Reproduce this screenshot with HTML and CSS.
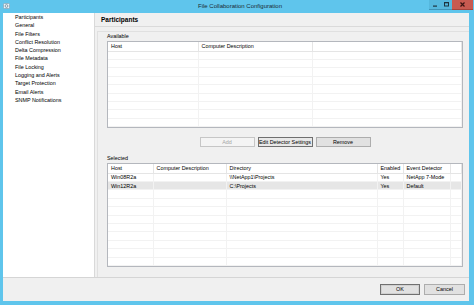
FILE: index.html
```html
<!DOCTYPE html>
<html>
    <head>
        <title>File Collaboration Configuration</title>
        <link rel="stylesheet" href="styles.css">
    </head>
    <body>
<div class="window">
    <div class="titlebar">
        <div class="appicon">
            <svg width="8" height="8" viewBox="0 0 8 8">
                <rect x="0.5" y="1.5" width="6" height="5" rx="1" fill="#e8f4fa" stroke="#8fa9b8" stroke-width="0.8"/>
                <circle cx="3.5" cy="4" r="1.4" fill="none" stroke="#6d8797" stroke-width="0.8"/>
            </svg>
        </div>
        <div class="title">File Collaboration Configuration</div>
        <div class="controls">
            <div class="ctl min">
                <svg width="12" height="9" viewBox="0 0 12 9"><rect x="4" y="5.5" width="4" height="1.2" fill="#1d3440"/></svg>
            </div>
            <div class="ctl max">
                <svg width="11" height="9" viewBox="0 0 11 9"><rect x="3.5" y="2.5" width="4" height="3.5" fill="none" stroke="#1d3440" stroke-width="1"/><rect x="3" y="2" width="5" height="1.3" fill="#1d3440"/></svg>
            </div>
            <div class="ctl close">
                <svg width="21" height="9" viewBox="0 0 21 9"><path d="M8.5 2.5 L12.5 6.5 M12.5 2.5 L8.5 6.5" stroke="#3b1512" stroke-width="1.2"/></svg>
            </div>
        </div>
    </div>
    <div class="client">
        <div class="main">
            <ul class="nav">
                <li>Participants</li>
                <li>General</li>
                <li>File Filters</li>
                <li>Conflict Resolution</li>
                <li>Delta Compression</li>
                <li>File Metadata</li>
                <li>File Locking</li>
                <li>Logging and Alerts</li>
                <li>Target Protection</li>
                <li>Email Alerts</li>
                <li>SNMP Notifications</li>
            </ul>
            <div class="panel">
                <div class="panel-head">Participants</div>
                <div class="panel-body">
                    <div class="label">Available</div>
                    <div class="list available">
                        <table>
                            <colgroup><col style="width:90px"><col style="width:114px"><col></colgroup>
                            <tr><th>Host</th><th>Computer Description</th><th></th></tr>
                            <tr><td></td><td></td><td></td></tr>
                            <tr><td></td><td></td><td></td></tr>
                            <tr><td></td><td></td><td></td></tr>
                            <tr><td></td><td></td><td></td></tr>
                            <tr><td></td><td></td><td></td></tr>
                            <tr><td></td><td></td><td></td></tr>
                            <tr><td></td><td></td><td></td></tr>
                            <tr><td></td><td></td><td></td></tr>
                            <tr><td></td><td></td><td></td></tr>
                            <tr><td></td><td></td><td></td></tr>
                        </table>
                    </div>
                    <div class="buttons">
                        <div class="button disabled">Add</div>
                        <div class="button focused">Edit Detector Settings</div>
                        <div class="button">Remove</div>
                    </div>
                    <div class="label selected-label">Selected</div>
                    <div class="list selected">
                        <table>
                            <colgroup><col style="width:45px"><col style="width:73px"><col style="width:151px"><col style="width:26px"><col style="width:47px"><col></colgroup>
                            <tr><th>Host</th><th>Computer Description</th><th>Directory</th><th>Enabled</th><th>Event Detector</th><th></th></tr>
                            <tr><td>Win08R2a</td><td></td><td>\\NetApp1\Projects</td><td>Yes</td><td>NetApp 7-Mode</td><td></td></tr>
                            <tr class="picked"><td>Win12R2a</td><td></td><td>C:\Projects</td><td>Yes</td><td>Default</td><td></td></tr>
                            <tr><td></td><td></td><td></td><td></td><td></td><td></td></tr>
                            <tr><td></td><td></td><td></td><td></td><td></td><td></td></tr>
                            <tr><td></td><td></td><td></td><td></td><td></td><td></td></tr>
                            <tr><td></td><td></td><td></td><td></td><td></td><td></td></tr>
                            <tr><td></td><td></td><td></td><td></td><td></td><td></td></tr>
                            <tr><td></td><td></td><td></td><td></td><td></td><td></td></tr>
                            <tr><td></td><td></td><td></td><td></td><td></td><td></td></tr>
                            <tr><td></td><td></td><td></td><td></td><td></td><td></td></tr>
                            <tr><td></td><td></td><td></td><td></td><td></td><td></td></tr>
                            <tr><td></td><td></td><td></td><td></td><td></td><td></td></tr>
                        </table>
                    </div>
                </div>
            </div>
        </div>
        <div class="footer">
            <div class="button default">OK</div>
            <div class="button cancel">Cancel</div>
        </div>
    </div>
</div>
    </body>
</html>
```

FILE: styles.css
```css
body {
    margin: 0;
    font-family: "Liberation Sans", Arial, sans-serif;
    font-size: 5.4px;
    color: #000;
}
.window {
    width: 474px;
    height: 305px;
    box-sizing: border-box;
    background: #5fc5ec;
    padding: 0 5px 4px 3px;
    display: flex;
    flex-direction: column;
}
.titlebar {
    height: 13px;
    display: grid;
    grid-template-columns: 1fr auto 1fr;
}
.appicon {
    padding: 2px 0 0 0;
}
.title {
    font-size: 6px;
    line-height: 12px;
    color: #1b2b33;
    padding-left: 8px;
}
.controls {
    display: flex;
    justify-content: flex-end;
    margin-right: -4px;
}
.ctl {
    height: 9px;
    display: flex;
}
.ctl.min, .ctl.max {
    background: #55b8de;
    border-bottom: 1px solid #3f95b8;
}
.ctl.close {
    background: #c75a50;
    border-bottom: 1px solid #a5443b;
}
.client {
    flex: 1;
    display: flex;
    flex-direction: column;
    background: #f0f0f0;
    min-height: 0;
}
.main {
    flex: 1;
    display: flex;
    min-height: 0;
}
.nav {
    width: 91px;
    margin: 0;
    padding: 0;
    list-style: none;
    background: #fff;
    border-right: 1px solid #d9d9d9;
}
.nav li {
    height: 8.3px;
    line-height: 8.3px;
    padding-left: 12px;
    white-space: nowrap;
}
.panel {
    flex: 1;
    display: flex;
    flex-direction: column;
}
.panel-head {
    height: 13px;
    line-height: 13px;
    padding-left: 6px;
    font-size: 6.5px;
    font-weight: bold;
    border-bottom: 1px solid #dadada;
}
.panel-body {
    flex: 1;
    margin: 4px 0 0 2px;
    padding: 0 6px 0 9px;
    border-top: 1px solid #e0e0e0;
    border-left: 1px solid #e0e0e0;
}
.label {
    height: 8px;
    line-height: 8px;
}
.selected-label {
    margin-top: 7px;
}
.list {
    margin-top: 1px;
    box-sizing: border-box;
    background: #fff;
    border: 1px solid #b4b7bd;
    overflow: hidden;
}
.available {
    height: 87px;
}
.selected {
    height: 104px;
}
table {
    width: 100%;
    table-layout: fixed;
    border-collapse: collapse;
}
th, td {
    padding: 0 3px;
    text-align: left;
    font-weight: normal;
    white-space: nowrap;
    overflow: hidden;
}
th {
    height: 8.7px;
    border-right: 1px solid #e5e5e5;
    border-bottom: 1px solid #e5e5e5;
}
td {
    height: 7.4px;
    border-right: 1px solid #f2f2f2;
    border-bottom: 1px solid #f2f2f2;
}
.picked td {
    background: #e6e6e6;
}
.buttons {
    display: flex;
    justify-content: center;
    gap: 3px;
    margin-top: 9px;
}
.button {
    height: 10px;
    line-height: 8px;
    box-sizing: border-box;
    text-align: center;
    background: #e1e1e1;
    border: 1px solid #adadad;
    user-select: none;
}
.buttons .button {
    width: 55px;
}
.button.disabled {
    background: #f4f4f4;
    border-color: #c6c6c6;
    color: #a6a6a6;
}
.button.focused {
    border-color: #6f6f6f;
    background: #e8e8e8;
}
.footer {
    height: 24px;
    box-sizing: border-box;
    border-top: 1px solid #d5d5d5;
    display: flex;
    justify-content: flex-end;
    align-items: center;
    gap: 4px;
    padding: 0 4px 1px 0;
}
.footer .button {
    height: 11px;
    line-height: 9px;
}
.button.default {
    width: 40px;
    border-color: #707070;
    box-shadow: inset 0 0 0 1px #d0d0d0;
}
.button.cancel {
    width: 41px;
}
```
